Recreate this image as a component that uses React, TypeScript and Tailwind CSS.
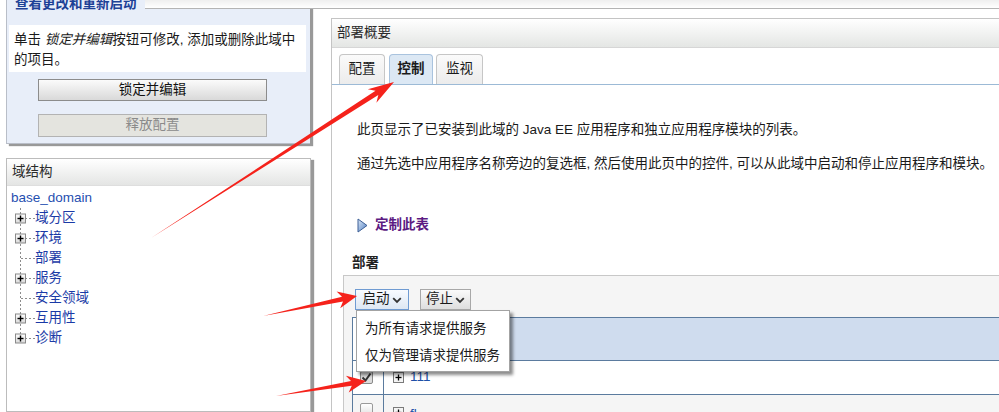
import React from 'react';

type Pt = [number, number];

function arrowPoints(t: Pt, p: Pt, len: number, w: number, h: number): string {
  const dx = p[0] - t[0];
  const dy = p[1] - t[1];
  const L = Math.hypot(dx, dy);
  const ux = dx / L;
  const uy = dy / L;
  const nx = -uy;
  const ny = ux;
  const jx = p[0] - ux * len * 0.78;
  const jy = p[1] - uy * len * 0.78;
  const bx = p[0] - ux * len;
  const by = p[1] - uy * len;
  const pts: Pt[] = [
    [t[0], t[1]],
    [jx + nx * w, jy + ny * w],
    [bx + nx * h, by + ny * h],
    [p[0], p[1]],
    [bx - nx * h, by - ny * h],
    [jx - nx * w, jy - ny * w],
  ];
  return pts.map((q) => `${q[0].toFixed(1)},${q[1].toFixed(1)}`).join(' ');
}

function TreeGutter({ plus, last }: { plus: boolean; last?: boolean }) {
  return (
    <svg width="24" height="20" viewBox="0 0 24 20" className="shrink-0">
      <defs>
        <linearGradient id="pb" x1="0" y1="0" x2="0" y2="1">
          <stop offset="0" stopColor="#ffffff" />
          <stop offset="1" stopColor="#d8d8d8" />
        </linearGradient>
      </defs>
      <line x1="9.5" y1="0" x2="9.5" y2={last ? 10 : 20} stroke="#8c8c8c" strokeDasharray="2 2" />
      <line x1="10" y1="10.5" x2="24" y2="10.5" stroke="#8c8c8c" strokeDasharray="2 2" />
      {plus && (
        <g>
          <rect x="4.5" y="6" width="10" height="9" fill="url(#pb)" stroke="#8a8a8a" />
          <line x1="6.5" y1="10.5" x2="12.5" y2="10.5" stroke="#000" strokeWidth="1.4" />
          <line x1="9.5" y1="7.5" x2="9.5" y2="13.5" stroke="#000" strokeWidth="1.4" />
        </g>
      )}
    </svg>
  );
}

function PlusBox() {
  return (
    <svg width="11" height="11" viewBox="0 0 11 11" className="shrink-0">
      <rect x="0.5" y="0.5" width="10" height="10" fill="#f4f4f4" stroke="#7a7a7a" />
      <line x1="2.5" y1="5.5" x2="8.5" y2="5.5" stroke="#000" strokeWidth="1.3" />
      <line x1="5.5" y1="2.5" x2="5.5" y2="8.5" stroke="#000" strokeWidth="1.3" />
    </svg>
  );
}

function Chevron() {
  return (
    <svg width="10" height="7" viewBox="0 0 10 7" className="ml-[2px] mt-[2px]">
      <polyline points="1.2,1.2 5,5 8.8,1.2" fill="none" stroke="#333" strokeWidth="1.8" />
    </svg>
  );
}

const tree = [
  { t: '域分区', p: true },
  { t: '环境', p: true },
  { t: '部署', p: false },
  { t: '服务', p: true },
  { t: '安全领域', p: false },
  { t: '互用性', p: true },
  { t: '诊断', p: true, last: true },
];

export default function App() {
  return (
    <div className="relative w-[999px] h-[412px] overflow-hidden bg-white font-['Liberation_Sans','Noto_Sans_CJK_SC',sans-serif] text-[13.5px] text-[#1a1a1a]">
      <div className="flex h-full">
        {/* left column */}
        <div className="w-[331px] shrink-0 pl-[6px] flex flex-col">
          {/* change center */}
          <div className="w-[304px] bg-[#e8eef9] border-l border-b border-[#b9bec8] shadow-[3px_2px_1px_rgba(0,0,0,0.4)]">
            <div className="h-[22px] pl-[8px] overflow-hidden">
              <div className="-mt-[2px] leading-[12px] font-bold text-[#1d4196] whitespace-nowrap">查看更改和重新启动</div>
            </div>
            <div className="mt-[3px] ml-[2px] w-[297px] h-[47px] bg-white pl-[5px] pt-[5px] leading-[20px]">
              <div className="whitespace-nowrap">
                单击 <span className="italic">锁定并编辑</span>按钮可修改, 添加或删除此域中
              </div>
              <div>的项目。</div>
            </div>
            <div className="ml-[31px] mt-[7px] w-[229px] h-[22px] border border-[#8c8c8c] bg-linear-to-b from-[#fbfbfb] to-[#d9d9d9] flex items-center justify-center text-[#111]">
              锁定并编辑
            </div>
            <div className="ml-[31px] mt-[13px] w-[229px] h-[23px] border border-[#b3b3b3] bg-[#e4e4df] flex items-center justify-center text-[#8a8a8a]">
              释放配置
            </div>
            <div className="h-[6px]" />
          </div>

          {/* domain structure */}
          <div className="mt-[14px] w-[305px] flex-1 border border-[#bcbcbc] bg-white shadow-[3px_2px_1px_rgba(0,0,0,0.4)]">
            <div className="h-[27px] pl-[5px] flex items-center border-b border-[#dedede] bg-linear-to-b from-white to-[#e4e5e4] text-[#2a2a2a]">
              域结构
            </div>
            <div className="pt-[2px] pl-[4px]">
              <div className="leading-[20px] text-[#1f4fb0]">base_domain</div>
              {tree.map((it) => (
                <div key={it.t} className="flex h-[20px] items-center">
                  <TreeGutter plus={it.p} last={it.last} />
                  <span className="leading-[20px] text-[#1a3aa6]">{it.t}</span>
                </div>
              ))}
            </div>
          </div>
        </div>

        {/* right column */}
        <div className="flex-1 min-w-0 pt-[18px] flex flex-col">
          <div className="flex-1 border-l border-t border-[#c4c4c4] flex flex-col">
            <div className="h-[29px] pl-[5px] flex items-center border-b border-[#d6d6d6] bg-linear-to-b from-white to-[#e4e6e4] text-[#2a2a2a]">
              部署概要
            </div>
            <div className="pt-[6px] pl-[7px] flex items-end border-b border-[#9cbad6]">
              <div className="w-[46px] h-[30px] border border-b-0 border-[#c6c6c6] rounded-t-[4px] bg-linear-to-b from-[#fafafa] to-[#ececec] flex items-center justify-center">
                配置
              </div>
              <div className="ml-[4px] w-[44px] h-[30px] border border-b-0 border-[#a9c3de] rounded-t-[4px] bg-[#dce8f4] flex items-center justify-center font-bold">
                控制
              </div>
              <div className="ml-[3px] w-[47px] h-[30px] border border-b-0 border-[#c6c6c6] rounded-t-[4px] bg-linear-to-b from-[#fafafa] to-[#ececec] flex items-center justify-center">
                监视
              </div>
            </div>

            <div className="pl-[25px] leading-[20px] whitespace-nowrap">
              <div className="mt-[35px]">此页显示了已安装到此域的 Java EE 应用程序和独立应用程序模块的列表。</div>
              <div className="mt-[14px]">通过先选中应用程序名称旁边的复选框, 然后使用此页中的控件, 可以从此域中启动和停止应用程序和模块。</div>
              <div className="mt-[41px] flex items-center h-[20px]">
                <svg width="11" height="15" viewBox="0 0 11 15" className="shrink-0">
                  <defs>
                    <linearGradient id="tri" x1="0" y1="0" x2="1" y2="1">
                      <stop offset="0" stopColor="#dce8f7" />
                      <stop offset="1" stopColor="#4f7fc2" />
                    </linearGradient>
                  </defs>
                  <polygon points="1,1 10,7.5 1,14" fill="url(#tri)" stroke="#3d5f96" strokeWidth="1" strokeLinejoin="round" />
                </svg>
                <span className="ml-[7px] font-bold text-[#5c1a82]">定制此表</span>
              </div>
            </div>

            <div className="ml-[11px] mt-[18px] flex-1 flex flex-col">
              <div className="pl-[9px] leading-[20px] font-bold text-[#222]">部署</div>
              <div className="mt-[2px] flex-1 border-l border-t border-[#c8c8c8] bg-[#f5f5f5]">
                <div className="h-[41px] pl-[11px] pt-[13px] flex items-start">
                  <div className="relative">
                    <div className="w-[54px] h-[21px] border border-[#6f9bd2] bg-linear-to-b from-[#f8fbff] to-[#dde7f3] flex items-center justify-center">
                      启动<Chevron />
                    </div>
                    <div className="absolute left-[1px] top-full z-10 w-[154px] h-[62px] bg-white border border-[#a3a3a3] shadow-[3px_3px_3px_rgba(0,0,0,0.45)] pl-[8px] pt-[5px] whitespace-nowrap">
                      <div className="h-[27px] flex items-center">为所有请求提供服务</div>
                      <div className="h-[27px] flex items-center">仅为管理请求提供服务</div>
                    </div>
                  </div>
                  <div className="ml-[11px] w-[51px] h-[21px] border border-[#a8a8a8] bg-linear-to-b from-[#fafafa] to-[#dedede] flex items-center justify-center">
                    停止<Chevron />
                  </div>
                </div>
                <div className="ml-[8px] border-l border-t border-[#5b7b9e]">
                  <div className="flex h-[42px]">
                    <div className="w-[31px] border-r border-[#8aa0b8] bg-white" />
                    <div className="flex-1 bg-[#cfdcee]" />
                  </div>
                  <div className="flex h-[34px] border-t border-[#5b7b9e] bg-white">
                    <div className="w-[31px] border-r border-[#5b7b9e] pl-[7px] flex items-center">
                      <div className="w-[13px] h-[13px] rounded-[2px] border border-[#8a8a8a] bg-[#dcdcdc] flex items-center justify-center">
                        <svg width="11" height="11" viewBox="0 0 11 11">
                          <polyline points="1.5,5.5 4.5,8.5 9.5,1.5" fill="none" stroke="#333" strokeWidth="2" />
                        </svg>
                      </div>
                    </div>
                    <div className="flex-1 pl-[9px] flex items-center">
                      <PlusBox />
                      <span className="ml-[6px] text-[#2050a8]">111</span>
                    </div>
                  </div>
                  <div className="flex h-[40px] border-t border-[#5b7b9e] bg-[#f5f5f5]">
                    <div className="w-[31px] border-r border-[#5b7b9e] pl-[7px] pt-[8px]">
                      <div className="w-[13px] h-[13px] rounded-[2px] border border-[#9a9a9a] bg-linear-to-b from-white to-[#e2e2e2]" />
                    </div>
                    <div className="flex-1 pl-[9px] pt-[12px] flex items-start">
                      <PlusBox />
                      <span className="ml-[6px] -mt-[3px] text-[#2050a8]">fl</span>
                    </div>
                  </div>
                </div>
              </div>
            </div>
          </div>
        </div>
      </div>

      {/* top stripe over the page */}
      <div className="absolute left-[145px] right-0 top-0 h-[9px] bg-linear-to-b from-[#efefef] to-white border-b border-[#b4b4b4]" />

      {/* annotation arrows */}
      <svg className="absolute inset-0 pointer-events-none z-20" width="999" height="412" viewBox="0 0 999 412">
        <polygon points={arrowPoints([151, 238], [394, 82], 26, 2.6, 8)} fill="#f5221b" />
        <polygon points={arrowPoints([263, 316], [357, 296], 19, 2.4, 8.5)} fill="#f5221b" />
        <polygon points={arrowPoints([276, 396], [366, 381], 19, 2.4, 8.5)} fill="#f5221b" />
      </svg>
    </div>
  );
}
